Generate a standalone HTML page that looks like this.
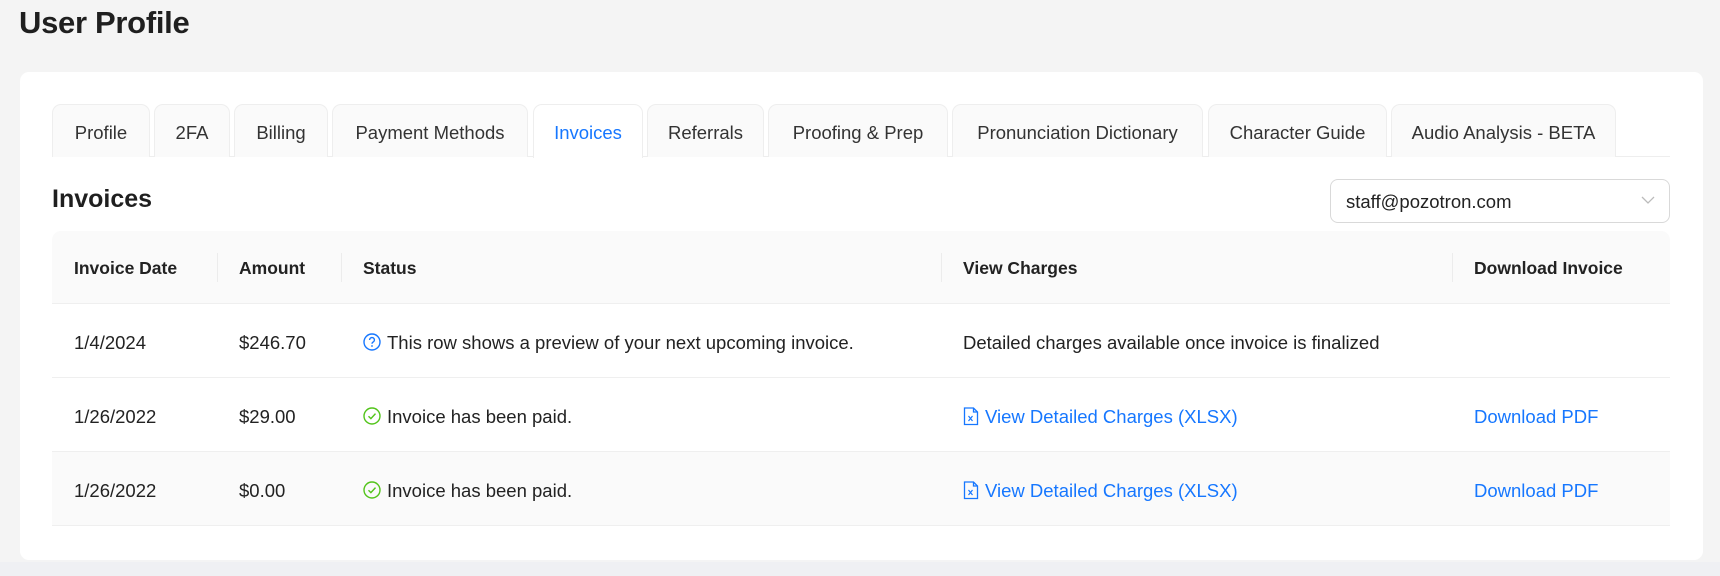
<!DOCTYPE html>
<html><head><meta charset="utf-8"><style>
*{box-sizing:border-box;margin:0;padding:0}
body{width:1720px;height:576px;background:#f4f4f4;font-family:"Liberation Sans",Arial,sans-serif;color:#222;position:relative;overflow:hidden}
.bottom{position:absolute;left:0;right:0;top:562px;height:14px;background:#eff0f3}
h1{position:absolute;left:19px;top:5px;font-size:31px;font-weight:600;color:#1f1f1f;letter-spacing:-0.3px}
.card{position:absolute;left:20px;top:72px;width:1683px;height:488px;background:#fff;border-radius:9px}
.tabs{position:absolute;left:32px;top:32px;width:1618px;height:53px;border-bottom:1px solid #eeeeee}
.tab{position:absolute;top:0;height:53px;background:#fafafa;border:1px solid #eeeeee;border-bottom:none;border-radius:9px 9px 0 0;font-size:18.5px;color:#333;text-align:center;line-height:55px}
.tab.act{background:#fff;color:#1677ff;height:54px}
h2{position:absolute;left:32px;top:113px;font-size:25px;font-weight:600;color:#1f1f1f}
.sel{position:absolute;left:1310px;top:107px;width:340px;height:44px;border:1px solid #d9d9d9;border-radius:8px;font-size:18.5px;line-height:44px;padding-left:15px;color:#222}
.sel svg{position:absolute;right:14px;top:15px}
.tbl{position:absolute;left:32px;top:159px;width:1618px}
.row{position:relative;height:74px;border-bottom:1px solid #efefef;font-size:18.5px}
.hd{height:73px;background:#fafafa;border-radius:9px 9px 0 0;font-weight:600;color:#222;font-size:17.5px}
.row.g{background:#fafafa}
.c{position:absolute;top:0;height:100%;line-height:77px;white-space:nowrap}
.hd .c{line-height:75px}
.hd .d{position:absolute;top:22px;width:1px;height:29px;background:#ececec}
.blue{color:#1677ff}
.ic{display:inline-block;vertical-align:middle;margin-right:6px;position:relative;top:-2px}
</style></head><body>
<div class="bottom"></div>
<h1>User Profile</h1>
<div class="card">
 <div class="tabs">
  <div class="tab" style="left:0;width:98px">Profile</div>
  <div class="tab" style="left:102px;width:76px">2FA</div>
  <div class="tab" style="left:182px;width:94px">Billing</div>
  <div class="tab" style="left:280px;width:196px">Payment Methods</div>
  <div class="tab act" style="left:481px;width:110px">Invoices</div>
  <div class="tab" style="left:595px;width:117px">Referrals</div>
  <div class="tab" style="left:716px;width:180px">Proofing &amp; Prep</div>
  <div class="tab" style="left:900px;width:251px">Pronunciation Dictionary</div>
  <div class="tab" style="left:1156px;width:179px">Character Guide</div>
  <div class="tab" style="left:1339px;width:225px">Audio Analysis - BETA</div>
 </div>
 <h2>Invoices</h2>
 <div class="sel">staff@pozotron.com<svg width="14" height="10" viewBox="0 0 14 10"><path d="M1 2l6 6 6-6" fill="none" stroke="#bbb" stroke-width="1.3"/></svg></div>
 <div class="tbl">
  <div class="row hd">
   <div class="c" style="left:22px">Invoice Date</div>
   <div class="d" style="left:165px"></div>
   <div class="c" style="left:187px">Amount</div>
   <div class="d" style="left:289px"></div>
   <div class="c" style="left:311px">Status</div>
   <div class="d" style="left:889px"></div>
   <div class="c" style="left:911px">View Charges</div>
   <div class="d" style="left:1400px"></div>
   <div class="c" style="left:1422px">Download Invoice</div>
  </div>
  <div class="row">
   <div class="c" style="left:22px">1/4/2024</div>
   <div class="c" style="left:187px">$246.70</div>
   <div class="c" style="left:311px"><svg class="ic" width="18" height="18" viewBox="0 0 18 18"><circle cx="9" cy="9" r="8" fill="none" stroke="#1677ff" stroke-width="1.4"/><path d="M6.6 7a2.4 2.4 0 1 1 3.4 2.1c-.7.4-1 .8-1 1.6" fill="none" stroke="#1677ff" stroke-width="1.4"/><circle cx="9" cy="13" r=".9" fill="#1677ff"/></svg>This row shows a preview of your next upcoming invoice.</div>
   <div class="c" style="left:911px">Detailed charges available once invoice is finalized</div>
  </div>
  <div class="row">
   <div class="c" style="left:22px">1/26/2022</div>
   <div class="c" style="left:187px">$29.00</div>
   <div class="c" style="left:311px"><svg class="ic" width="18" height="18" viewBox="0 0 18 18"><circle cx="9" cy="9" r="8" fill="none" stroke="#52c41a" stroke-width="1.4"/><path d="M5.5 9.2l2.4 2.4 4.6-5" fill="none" stroke="#52c41a" stroke-width="1.4"/></svg>Invoice has been paid.</div>
   <div class="c blue" style="left:911px"><svg class="ic" width="16" height="19" viewBox="0 0 16 19"><path d="M1.5 1h9l4 4v12.5h-13z M10.5 1v4h4" fill="none" stroke="#1677ff" stroke-width="1.3"/><path d="M5.5 9l4 5M9.5 9l-4 5" stroke="#1677ff" stroke-width="1.2"/></svg>View Detailed Charges (XLSX)</div>
   <div class="c blue" style="left:1422px">Download PDF</div>
  </div>
  <div class="row g">
   <div class="c" style="left:22px">1/26/2022</div>
   <div class="c" style="left:187px">$0.00</div>
   <div class="c" style="left:311px"><svg class="ic" width="18" height="18" viewBox="0 0 18 18"><circle cx="9" cy="9" r="8" fill="none" stroke="#52c41a" stroke-width="1.4"/><path d="M5.5 9.2l2.4 2.4 4.6-5" fill="none" stroke="#52c41a" stroke-width="1.4"/></svg>Invoice has been paid.</div>
   <div class="c blue" style="left:911px"><svg class="ic" width="16" height="19" viewBox="0 0 16 19"><path d="M1.5 1h9l4 4v12.5h-13z M10.5 1v4h4" fill="none" stroke="#1677ff" stroke-width="1.3"/><path d="M5.5 9l4 5M9.5 9l-4 5" stroke="#1677ff" stroke-width="1.2"/></svg>View Detailed Charges (XLSX)</div>
   <div class="c blue" style="left:1422px">Download PDF</div>
  </div>
 </div>
</div>
</body></html>
